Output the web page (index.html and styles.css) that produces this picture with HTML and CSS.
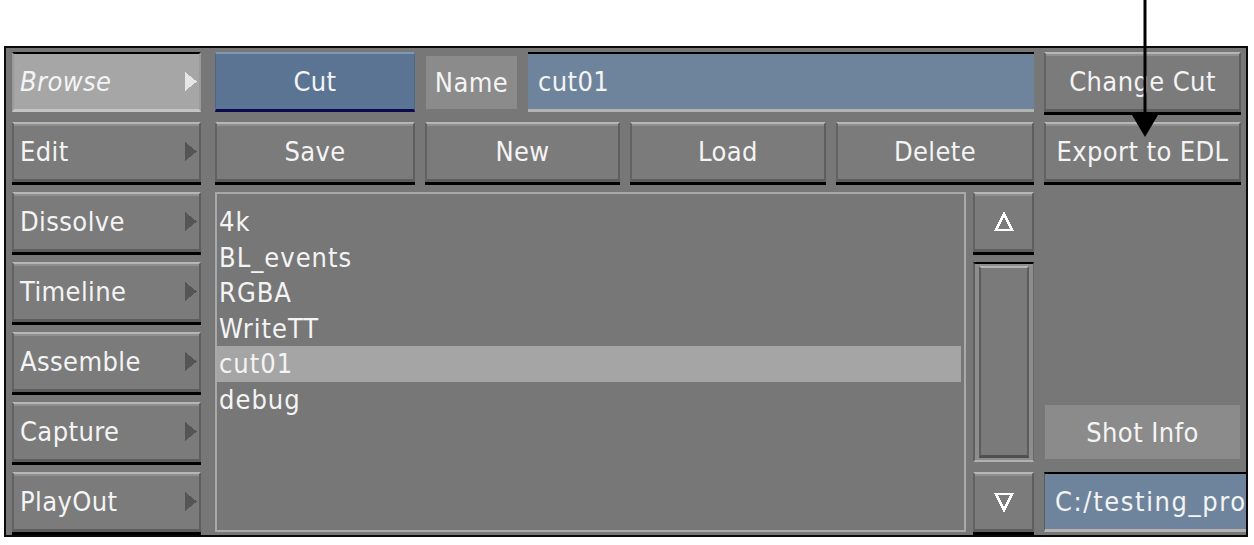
FILE: index.html
```html
<!DOCTYPE html>
<html>
<head>
<meta charset="utf-8">
<title>Cut Browser</title>
<link rel="stylesheet" href="styles.css">
</head>
<body>
<svg class="annot" width="30" height="140" viewBox="0 0 30 140">
  <line x1="15" y1="0" x2="15" y2="118" stroke="#000" stroke-width="3"/>
  <polygon points="2,115 28,115 15,137" fill="#000"/>
</svg>
<div class="panel">
  <nav class="nav">
    <div class="navbtn pressed"><span class="italic">Browse</span><svg class="tri" width="12" height="19" viewBox="0 0 12 19"><polygon points="0,0 12,9.5 0,19" fill="#e6e6e6"/></svg></div>
    <div class="navbtn"><span>Edit</span><svg class="tri" width="12" height="19" viewBox="0 0 12 19"><polygon points="0,0 12,9.5 0,19" fill="#555"/></svg></div>
    <div class="navbtn"><span>Dissolve</span><svg class="tri" width="12" height="19" viewBox="0 0 12 19"><polygon points="0,0 12,9.5 0,19" fill="#555"/></svg></div>
    <div class="navbtn"><span>Timeline</span><svg class="tri" width="12" height="19" viewBox="0 0 12 19"><polygon points="0,0 12,9.5 0,19" fill="#555"/></svg></div>
    <div class="navbtn"><span>Assemble</span><svg class="tri" width="12" height="19" viewBox="0 0 12 19"><polygon points="0,0 12,9.5 0,19" fill="#555"/></svg></div>
    <div class="navbtn"><span>Capture</span><svg class="tri" width="12" height="19" viewBox="0 0 12 19"><polygon points="0,0 12,9.5 0,19" fill="#555"/></svg></div>
    <div class="navbtn"><span>PlayOut</span><svg class="tri" width="12" height="19" viewBox="0 0 12 19"><polygon points="0,0 12,9.5 0,19" fill="#555"/></svg></div>
  </nav>
  <div class="main">
    <div class="cutbtn">Cut</div>
    <div class="namebox">
      <div class="namelabel">Name</div>
      <div class="field namefield">cut01</div>
    </div>
    <div class="btn">Change Cut</div>

    <div class="btn">Save</div>
    <div class="btn">New</div>
    <div class="btn">Load</div>
    <div class="btn">Delete</div>
    <div class="btn">Export to EDL</div>

    <div class="browser">
      <div class="list">
        <div class="item">4k</div>
        <div class="item">BL_events</div>
        <div class="item">RGBA</div>
        <div class="item">WriteTT</div>
        <div class="item selected">cut01</div>
        <div class="item">debug</div>
      </div>
      <div class="scroll">
        <div class="btn sbtn"><svg width="20" height="20" viewBox="0 0 20 20"><polygon points="10,2 18,18 2,18" fill="none" stroke="#fff" stroke-width="2.4" stroke-linejoin="miter"/></svg></div>
        <div class="track"><div class="thumb"></div></div>
        <div class="btn sbtn"><svg width="20" height="20" viewBox="0 0 20 20"><polygon points="2,2 18,2 10,18" fill="none" stroke="#fff" stroke-width="2.4" stroke-linejoin="miter"/></svg></div>
      </div>
    </div>

    <div class="side">
      <div class="shotinfo">Shot Info</div>
      <div class="field pathfield">C:/testing_pro</div>
    </div>
  </div>
</div>
</body>
</html>
```

FILE: styles.css
```css
html, body {
  margin: 0;
  padding: 0;
  background: #ffffff;
}

body {
  font-family: "DejaVu Sans Condensed", "DejaVu Sans", sans-serif;
  font-stretch: condensed;
  font-size: 27px;
  letter-spacing: 0.4px;
  color: #f4f4f4;
  position: relative;
  width: 1254px;
  height: 545px;
  overflow: hidden;
}

.annot {
  position: absolute;
  left: 1130px;
  top: 0;
  z-index: 5;
}

.panel {
  box-sizing: border-box;
  margin: 46px 0 0 4px;
  width: 1244px;
  height: 491px;
  border: 2px solid #0a0a0a;
  background: #777777;
  padding: 4px 0 0 6px;
  display: flex;
  gap: 14px;
  overflow: hidden;
}

/* left navigation */
.nav {
  width: 189px;
  flex: none;
  display: grid;
  grid-template-rows: repeat(7, 60px);
  row-gap: 10px;
}

.navbtn {
  box-sizing: border-box;
  display: flex;
  align-items: center;
  justify-content: space-between;
  padding: 0 2px 0 6px;
  background: #7b7b7b;
  border-top: 2px solid #b6b6b6;
  border-left: 2px solid #626262;
  border-right: 2px solid #5e5e5e;
  border-bottom: 3px solid #5e5e5e;
  box-shadow: inset 0 2px 0 #8f8f8f, 0 3px 0 #000;
}

.navbtn.pressed {
  background: #a6a6a6;
  border-top: 2px solid #000;
  border-left: 2px solid #9a9a9a;
  border-right: 2px solid #9a9a9a;
  border-bottom: 3px solid #c4c4c4;
  box-shadow: none;
}

.italic {
  font-style: italic;
}

.tri {
  display: block;
  shape-rendering: crispEdges;
}

/* main area */
.main {
  display: grid;
  grid-template-columns: 200px 195px 196px 198px 197px;
  grid-template-rows: repeat(7, 60px);
  column-gap: 10px;
  row-gap: 10px;
}

.btn {
  box-sizing: border-box;
  display: flex;
  align-items: center;
  justify-content: center;
  background: #7b7b7b;
  border-top: 2px solid #b6b6b6;
  border-left: 2px solid #626262;
  border-right: 2px solid #5e5e5e;
  border-bottom: 3px solid #5e5e5e;
  box-shadow: inset 0 2px 0 #8f8f8f, 0 3px 0 #000;
  white-space: nowrap;
}

.cutbtn {
  box-sizing: border-box;
  display: flex;
  align-items: center;
  justify-content: center;
  background: #5b7494;
  border-top: 2px solid #8097b3;
  border-left: 1px solid #4d6787;
  border-right: 1px solid #4d6787;
  border-bottom: 3px solid #0a0a4c;
}

.namebox {
  grid-column: 2 / 5;
  display: flex;
  gap: 11px;
  padding-left: 1px;
}

.namelabel {
  width: 91px;
  flex: none;
  margin: 4px 0 3px;
  background: #8b8b8b;
  display: flex;
  align-items: center;
  justify-content: center;
}

.field {
  box-sizing: border-box;
  background: #6e849d;
  border-top: 2px solid #000;
  border-bottom: 3px solid #b2b2b2;
  display: flex;
  align-items: center;
  white-space: nowrap;
  overflow: hidden;
}

.namefield {
  flex: 1;
  padding-left: 10px;
}

/* browser list */
.browser {
  grid-column: 1 / 5;
  grid-row: 3 / 8;
  display: flex;
  gap: 7px;
}

.list {
  flex: 1;
  box-sizing: border-box;
  border: 2px solid #a9a9a9;
  padding: 10px 3px 0 0;
  background: #777777;
  letter-spacing: 1px;
}

.item {
  height: 35.5px;
  line-height: 35.5px;
  padding-left: 2px;
  white-space: nowrap;
}

.item.selected {
  background: #a5a5a5;
}

.scroll {
  width: 61px;
  flex: none;
  display: grid;
  grid-template-rows: 60px 200px 60px;
  row-gap: 10px;
}

.sbtn svg {
  display: block;
  shape-rendering: crispEdges;
}

.track {
  box-sizing: border-box;
  background: #8d8d8d;
  border-top: 2px solid #000;
  border-left: 2px solid #5f5f5f;
  border-right: 1px solid #6a6a6a;
  border-bottom: 2px solid #b0b0b0;
  padding: 2px 4px 2px 4px;
  display: flex;
}

.thumb {
  flex: 1;
  box-sizing: border-box;
  background: #7a7a7a;
  border-top: 2px solid #b5b5b5;
  border-left: 2px solid #5c5c5c;
  border-right: 2px solid #5c5c5c;
  border-bottom: 3px solid #4f4f4f;
}

/* right side */
.side {
  grid-column: 5;
  grid-row: 6 / 8;
  display: grid;
  grid-template-rows: 60px 60px;
  row-gap: 10px;
}

.shotinfo {
  margin: 3px 1px 3px 1px;
  background: #8b8b8b;
  display: flex;
  align-items: center;
  justify-content: center;
}

.pathfield {
  margin-right: -12px;
  padding-left: 10px;
  border-left: 1px solid #5a5a5a;
  letter-spacing: 1.6px;
}
```
